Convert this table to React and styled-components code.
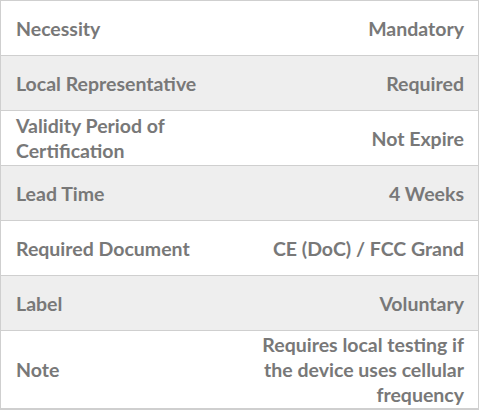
import styled, { createGlobalStyle } from 'styled-components';

const GlobalStyle = createGlobalStyle`
  body {
    margin: 0;
    background: #ffffff;
    font-family: Lato, "Open Sans", sans-serif;
  }
`;

const rows = [
  { label: 'Necessity', value: 'Mandatory' },
  { label: 'Local Representative', value: 'Required' },
  { label: 'Validity Period of Certification', value: 'Not Expire' },
  { label: 'Lead Time', value: '4 Weeks' },
  { label: 'Required Document', value: 'CE (DoC) / FCC Grand' },
  { label: 'Label', value: 'Voluntary' },
  { label: 'Note', value: 'Requires local testing if the device uses cellular frequency', tall: true },
];

const Table = styled.div`
  width: 479px;
  border: 1px solid #cfcfcf;
  border-bottom-width: 2px;
  box-sizing: border-box;
`;

const Row = styled.div`
  display: flex;
  align-items: center;
  justify-content: space-between;
  gap: 20px;
  height: ${(p) => (p.$tall ? '77px' : '54px')};
  padding: 0 14px 0 15px;
  background: ${(p) => (p.$shaded ? '#eeeeee' : '#ffffff')};
  border-top: ${(p) => (p.$first ? 'none' : '1px solid #cfcfcf')};
  color: #787878;
  font-weight: 700;
  font-size: 19.5px;
  line-height: 25px;
`;

const Label = styled.div`
  flex: 0 0 190px;
`;

const Value = styled.div`
  text-align: right;
  max-width: 212px;
`;

export default function App() {
  return (
    <>
      <GlobalStyle />
      <Table>
        {rows.map((row, i) => (
          <Row key={row.label} $first={i === 0} $shaded={i % 2 === 1} $tall={row.tall}>
            <Label>{row.label}</Label>
            <Value>{row.value}</Value>
          </Row>
        ))}
      </Table>
    </>
  );
}
